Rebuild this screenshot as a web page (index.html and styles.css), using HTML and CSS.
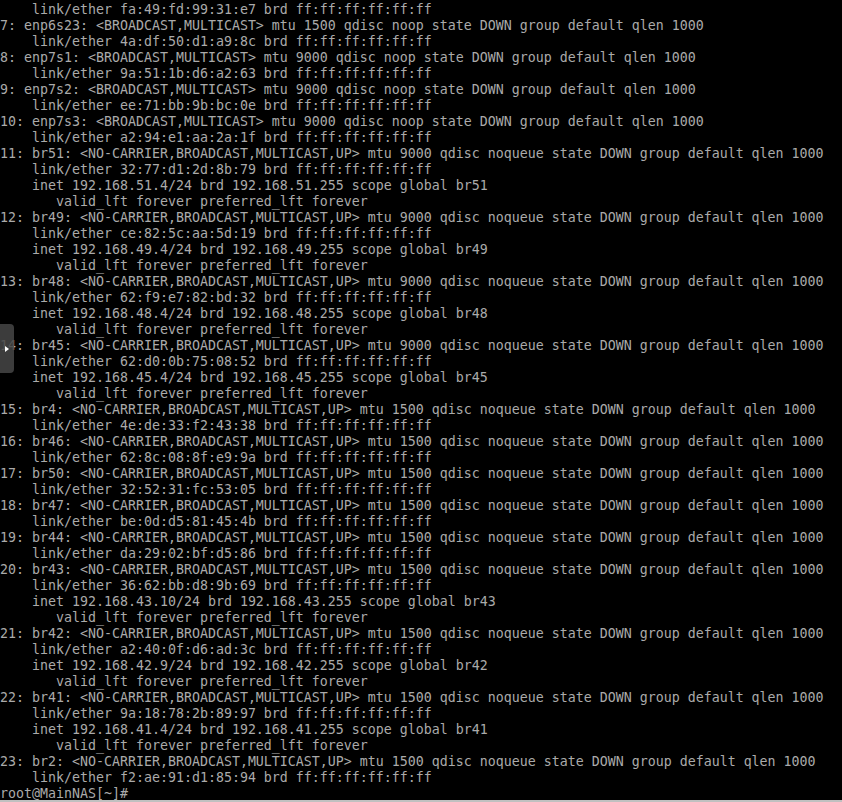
FILE: index.html
```html
<!DOCTYPE html>
<html>
<head>
<meta charset="utf-8">
<link rel="stylesheet" href="styles.css">
</head>
<body>
<div class="screen">
<pre class="term">    link/ether fa:49:fd:99:31:e7 brd ff:ff:ff:ff:ff:ff
7: enp6s23: &lt;BROADCAST,MULTICAST&gt; mtu 1500 qdisc noop state DOWN group default qlen 1000
    link/ether 4a:df:50:d1:a9:8c brd ff:ff:ff:ff:ff:ff
8: enp7s1: &lt;BROADCAST,MULTICAST&gt; mtu 9000 qdisc noop state DOWN group default qlen 1000
    link/ether 9a:51:1b:d6:a2:63 brd ff:ff:ff:ff:ff:ff
9: enp7s2: &lt;BROADCAST,MULTICAST&gt; mtu 9000 qdisc noop state DOWN group default qlen 1000
    link/ether ee:71:bb:9b:bc:0e brd ff:ff:ff:ff:ff:ff
10: enp7s3: &lt;BROADCAST,MULTICAST&gt; mtu 9000 qdisc noop state DOWN group default qlen 1000
    link/ether a2:94:e1:aa:2a:1f brd ff:ff:ff:ff:ff:ff
11: br51: &lt;NO-CARRIER,BROADCAST,MULTICAST,UP&gt; mtu 9000 qdisc noqueue state DOWN group default qlen 1000
    link/ether 32:77:d1:2d:8b:79 brd ff:ff:ff:ff:ff:ff
    inet 192.168.51.4/24 brd 192.168.51.255 scope global br51
       valid_lft forever preferred_lft forever
12: br49: &lt;NO-CARRIER,BROADCAST,MULTICAST,UP&gt; mtu 9000 qdisc noqueue state DOWN group default qlen 1000
    link/ether ce:82:5c:aa:5d:19 brd ff:ff:ff:ff:ff:ff
    inet 192.168.49.4/24 brd 192.168.49.255 scope global br49
       valid_lft forever preferred_lft forever
13: br48: &lt;NO-CARRIER,BROADCAST,MULTICAST,UP&gt; mtu 9000 qdisc noqueue state DOWN group default qlen 1000
    link/ether 62:f9:e7:82:bd:32 brd ff:ff:ff:ff:ff:ff
    inet 192.168.48.4/24 brd 192.168.48.255 scope global br48
       valid_lft forever preferred_lft forever
14: br45: &lt;NO-CARRIER,BROADCAST,MULTICAST,UP&gt; mtu 9000 qdisc noqueue state DOWN group default qlen 1000
    link/ether 62:d0:0b:75:08:52 brd ff:ff:ff:ff:ff:ff
    inet 192.168.45.4/24 brd 192.168.45.255 scope global br45
       valid_lft forever preferred_lft forever
15: br4: &lt;NO-CARRIER,BROADCAST,MULTICAST,UP&gt; mtu 1500 qdisc noqueue state DOWN group default qlen 1000
    link/ether 4e:de:33:f2:43:38 brd ff:ff:ff:ff:ff:ff
16: br46: &lt;NO-CARRIER,BROADCAST,MULTICAST,UP&gt; mtu 1500 qdisc noqueue state DOWN group default qlen 1000
    link/ether 62:8c:08:8f:e9:9a brd ff:ff:ff:ff:ff:ff
17: br50: &lt;NO-CARRIER,BROADCAST,MULTICAST,UP&gt; mtu 1500 qdisc noqueue state DOWN group default qlen 1000
    link/ether 32:52:31:fc:53:05 brd ff:ff:ff:ff:ff:ff
18: br47: &lt;NO-CARRIER,BROADCAST,MULTICAST,UP&gt; mtu 1500 qdisc noqueue state DOWN group default qlen 1000
    link/ether be:0d:d5:81:45:4b brd ff:ff:ff:ff:ff:ff
19: br44: &lt;NO-CARRIER,BROADCAST,MULTICAST,UP&gt; mtu 1500 qdisc noqueue state DOWN group default qlen 1000
    link/ether da:29:02:bf:d5:86 brd ff:ff:ff:ff:ff:ff
20: br43: &lt;NO-CARRIER,BROADCAST,MULTICAST,UP&gt; mtu 1500 qdisc noqueue state DOWN group default qlen 1000
    link/ether 36:62:bb:d8:9b:69 brd ff:ff:ff:ff:ff:ff
    inet 192.168.43.10/24 brd 192.168.43.255 scope global br43
       valid_lft forever preferred_lft forever
21: br42: &lt;NO-CARRIER,BROADCAST,MULTICAST,UP&gt; mtu 1500 qdisc noqueue state DOWN group default qlen 1000
    link/ether a2:40:0f:d6:ad:3c brd ff:ff:ff:ff:ff:ff
    inet 192.168.42.9/24 brd 192.168.42.255 scope global br42
       valid_lft forever preferred_lft forever
22: br41: &lt;NO-CARRIER,BROADCAST,MULTICAST,UP&gt; mtu 1500 qdisc noqueue state DOWN group default qlen 1000
    link/ether 9a:18:78:2b:89:97 brd ff:ff:ff:ff:ff:ff
    inet 192.168.41.4/24 brd 192.168.41.255 scope global br41
       valid_lft forever preferred_lft forever
23: br2: &lt;NO-CARRIER,BROADCAST,MULTICAST,UP&gt; mtu 1500 qdisc noqueue state DOWN group default qlen 1000
    link/ether f2:ae:91:d1:85:94 brd ff:ff:ff:ff:ff:ff
root@MainNAS[~]#</pre>
<div class="bottom-strip"></div>
<div class="side-tab"><span class="tab-arrow"></span></div>
</div>
</body>
</html>
```

FILE: styles.css
```css
html, body {
  margin: 0;
  padding: 0;
  background: #000;
  overflow: hidden;
}
.screen {
  position: relative;
  width: 842px;
  height: 802px;
  background: #000;
  overflow: hidden;
}
.term {
  margin: 0;
  padding: 2px 0 0 0;
  height: 798px;
  overflow: hidden;
  font-family: "DejaVu Sans Mono", "Liberation Mono", monospace;
  font-size: 13.29px;
  line-height: 16px;
  color: #aaaaaa;
  white-space: pre;
}
.bottom-strip {
  height: 2px;
  background: #c0c0c0;
}
.side-tab {
  position: absolute;
  left: 0;
  top: 324px;
  width: 14px;
  height: 49px;
  background: rgba(70, 70, 70, 0.85);
  border-radius: 0 4px 4px 0;
  display: flex;
  align-items: center;
  justify-content: center;
}
.tab-arrow {
  width: 0;
  height: 0;
  border-top: 3px solid transparent;
  border-bottom: 3px solid transparent;
  border-left: 4px solid #fff;
  margin-left: -1px;
}
```
